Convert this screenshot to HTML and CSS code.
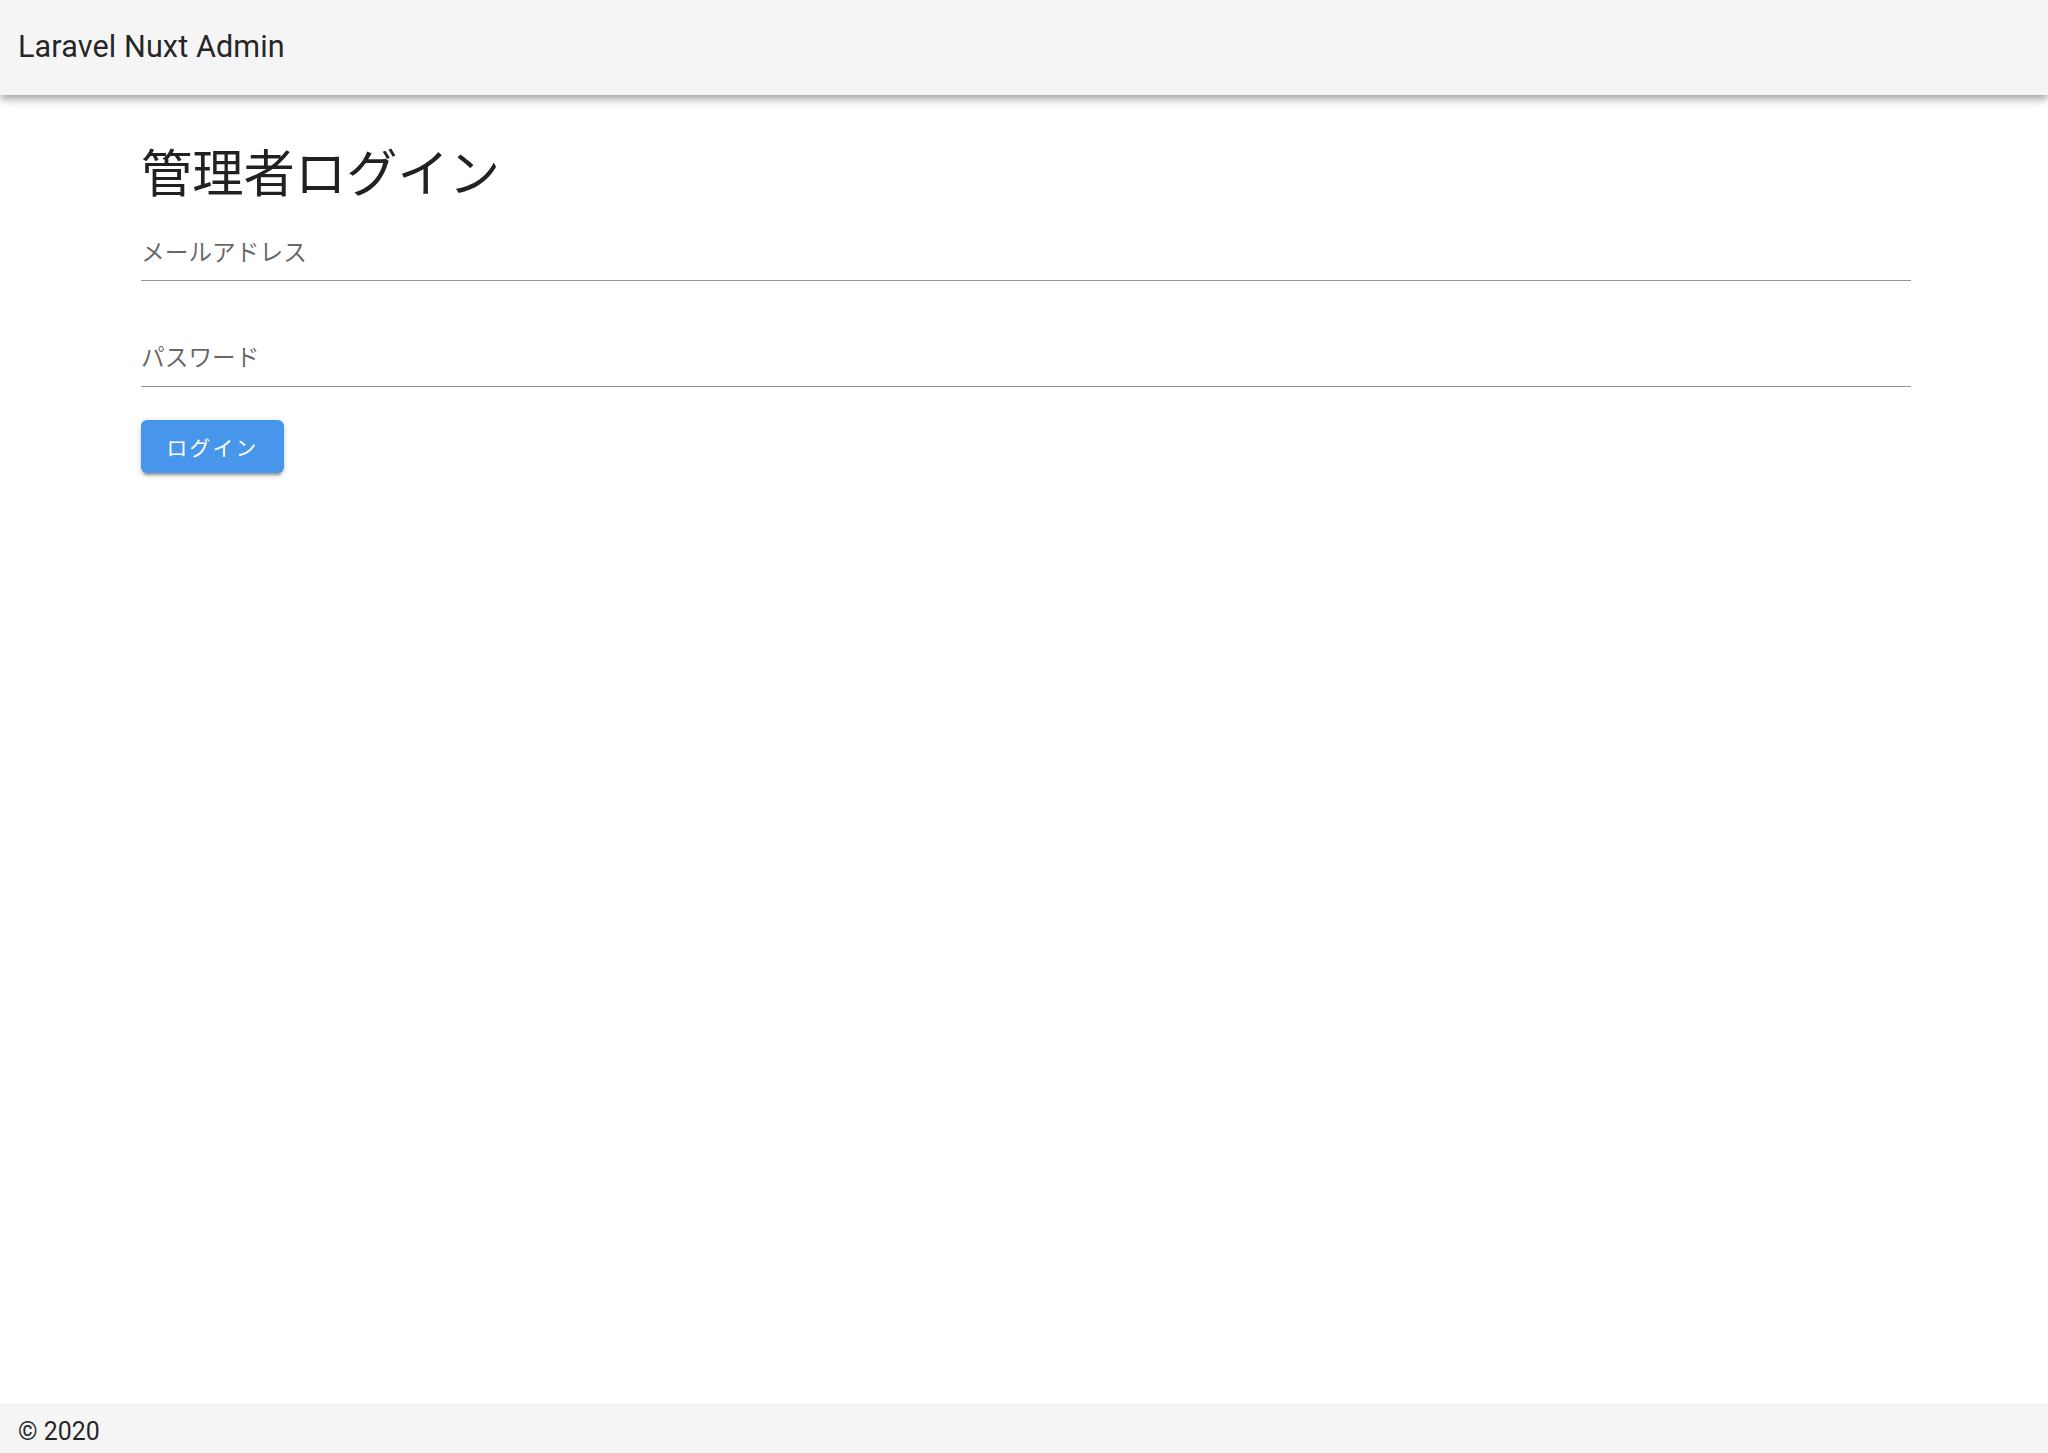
FILE: index.html
```html
<!DOCTYPE html>
<html lang="ja">
<head>
<meta charset="utf-8">
<title>Laravel Nuxt Admin</title>
<link rel="stylesheet" href="styles.css">
</head>
<body>
<div class="app">
  <header class="app-bar">
    <div class="app-title">Laravel Nuxt Admin</div>
  </header>
  <main class="main">
    <div class="container">
      <h1 class="page-title">管理者ログイン</h1>
      <form class="login-form">
        <label class="field field-email">
          <input class="field-input" type="email" placeholder="メールアドレス">
        </label>
        <label class="field field-password">
          <input class="field-input" type="password" placeholder="パスワード">
        </label>
        <button class="btn-login" type="button">ログイン</button>
      </form>
    </div>
  </main>
  <footer class="app-footer">
    <span class="footer-text">© 2020</span>
  </footer>
</div>
</body>
</html>
```
FILE: styles.css
```css
* { box-sizing: border-box; }
html, body { margin: 0; padding: 0; height: 100%; }
body {
  font-family: Roboto, "Noto Sans CJK JP", sans-serif;
  background: #ffffff;
  color: rgba(0,0,0,0.87);
}
.app {
  display: flex;
  flex-direction: column;
  min-height: 100vh;
}
.app-bar {
  height: 95px;
  background: #f5f5f5;
  display: flex;
  align-items: center;
  padding: 0 18px;
  box-shadow: 0 3px 6px -1.5px rgba(0,0,0,.2), 0 6px 7px 0 rgba(0,0,0,.14), 0 1.5px 15px 0 rgba(0,0,0,.12);
  position: relative;
  z-index: 2;
}
.app-title {
  font-size: 30.6px;
  line-height: 1;
  color: rgba(0,0,0,0.87);
  font-weight: 400;
  letter-spacing: 0.1px;
}
.main {
  flex: 1;
}
.container {
  margin: 0 137px 0 141px;
}
.page-title {
  margin: 50px 0 0 0;
  font-family: Roboto, "Noto Sans CJK JP", sans-serif;
  font-size: 51.3px;
  line-height: 59px;
  font-weight: 400;
  color: rgba(0,0,0,0.87);
  letter-spacing: 0;
}
.login-form {
  display: flex;
  flex-direction: column;
  align-items: flex-start;
}
.field {
  display: block;
  width: 100%;
  border-bottom: 1.5px solid #949494;
}
.field-email {
  margin-top: 32px;
  padding-bottom: 9px;
}
.field-password {
  margin-top: 60px;
  padding-bottom: 10px;
}
.field-input {
  display: block;
  width: 100%;
  border: 0;
  outline: none;
  padding: 0;
  margin: 0;
  background: transparent;
  font-family: Roboto, "Noto Sans CJK JP", sans-serif;
  font-size: 23.7px;
  line-height: 35px;
  height: 35px;
  color: rgba(0,0,0,0.87);
}
.field-input::placeholder {
  color: rgba(0,0,0,0.6);
  opacity: 1;
}
.btn-login {
  margin-top: 33px;
  width: 143px;
  height: 53px;
  border: 0;
  border-radius: 6px;
  background: #4896eb;
  color: #ffffff;
  font-family: Roboto, "Noto Sans CJK JP", sans-serif;
  font-size: 20.7px;
  letter-spacing: 2.3px;
  font-weight: 400;
  padding: 0 0 0 0;
  box-shadow: 0 4.5px 1.5px -3px rgba(0,0,0,.2), 0 3px 3px 0 rgba(0,0,0,.14), 0 1.5px 7px 0 rgba(0,0,0,.12);
  cursor: pointer;
}
.app-footer {
  height: 50px;
  background: #f5f5f5;
  display: flex;
  align-items: center;
  padding: 8px 18px 0 18px;
}
.footer-text {
  font-size: 24.9px;
  line-height: 1;
  color: rgba(0,0,0,0.87);
}
```
